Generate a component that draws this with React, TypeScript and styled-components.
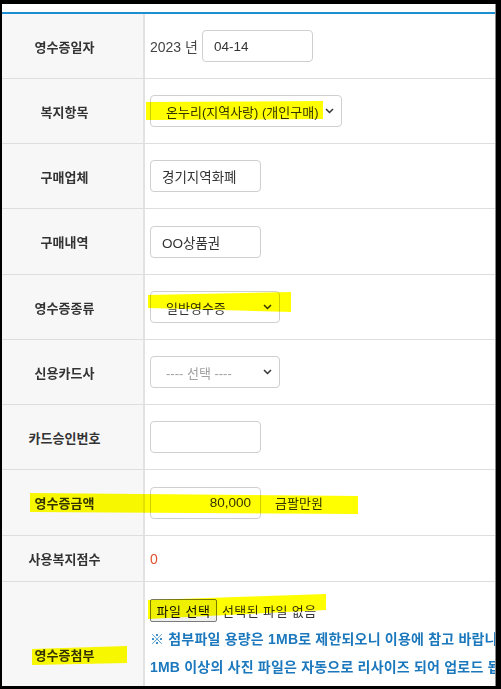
import React from 'react';
import styled, { createGlobalStyle } from 'styled-components';

const GlobalStyle = createGlobalStyle`
  html, body {
    margin: 0;
    padding: 0;
    background: #000;
  }
  * {
    box-sizing: border-box;
  }
`;

const FONT = `"Liberation Sans", "Noto Sans CJK KR", sans-serif`;

const Frame = styled.div`
  height: 689px;
  padding: 4px 5px 3px 2px;
  background: #000;
  overflow: hidden;
`;

const Panel = styled.div`
  height: 682px;
  background: #fff;
  border-right: 1px solid #8a8a8a;
  padding-top: 8px;
  overflow: hidden;
  font-family: ${FONT};
  color: #333;
`;

const Table = styled.div`
  border-top: 2px solid #1b8fd2;
`;

const Row = styled.div<{ $h: number }>`
  position: relative;
  display: grid;
  grid-template-columns: 143px 1fr;
  height: ${p => p.$h}px;
  border-bottom: 1px solid #dedede;
`;

const Label = styled.div`
  display: flex;
  align-items: center;
  justify-content: center;
  padding-right: 16px;
  background: #f7f7f7;
  border-right: 2px solid #e2e2e2;
  font-size: 13px;
  font-weight: 700;
  color: #333;
  white-space: nowrap;
`;

const Cell = styled.div<{ $top?: boolean }>`
  display: flex;
  flex-direction: ${p => (p.$top ? 'column' : 'row')};
  align-items: ${p => (p.$top ? 'flex-start' : 'center')};
  padding: ${p => (p.$top ? '17px 0 0 5px' : '0 0 0 5px')};
  font-size: 13px;
  white-space: nowrap;
  min-width: 0;
`;

const TextBox = styled.div<{ $right?: boolean }>`
  display: flex;
  align-items: center;
  justify-content: ${p => (p.$right ? 'flex-end' : 'flex-start')};
  width: 111px;
  height: 32px;
  padding: 0 9px 0 11px;
  border: 1px solid #cfcfcf;
  border-radius: 4px;
  background: #fff;
  font-size: 13.5px;
  color: #333;
`;

const Select = styled.div<{ $w: number; $muted?: boolean }>`
  display: flex;
  align-items: center;
  justify-content: space-between;
  width: ${p => p.$w}px;
  height: 32px;
  padding: 0 7px 0 15px;
  border: 1px solid #cfcfcf;
  border-radius: 4px;
  background: #fff;
  font-size: 13px;
  color: ${p => (p.$muted ? '#a0a0a0' : '#333')};
`;

const Chevron = () => (
  <svg width="9" height="6" viewBox="0 0 9 6">
    <path d="M1 1l3.5 3.5L8 1" fill="none" stroke="#333" strokeWidth="1.5" />
  </svg>
);

const Year = styled.span`
  margin-right: 4px;
  font-size: 14px;
  color: #444;
`;

const Won = styled.span`
  margin-left: 14px;
  font-size: 13px;
  color: #333;
`;

const Score = styled.span`
  font-size: 14px;
  color: #e0502e;
`;

const FileLine = styled.div`
  display: flex;
  align-items: center;
  font-size: 13px;
`;

const FileButton = styled.span`
  display: inline-flex;
  align-items: center;
  justify-content: center;
  width: 67px;
  height: 23px;
  border: 1px solid #7a7a7a;
  border-radius: 2px;
  background: #efefef;
  color: #111;
  font-size: 13px;
  letter-spacing: 0.5px;
`;

const FileName = styled.span`
  margin-left: 5px;
  color: #333;
  letter-spacing: 0.4px;
`;

const Notice = styled.p`
  margin: 7px 0 0;
  line-height: 21px;
  font-size: 14px;
  font-weight: 700;
  color: #1c78bd;
  letter-spacing: 0.2px;
`;

const Marker = styled.svg<{ $x: number; $y: number }>`
  position: absolute;
  left: ${p => p.$x}px;
  top: ${p => p.$y}px;
  mix-blend-mode: multiply;
  pointer-events: none;
`;

const Highlight = ({ x, y, w, h, points }: { x: number; y: number; w: number; h: number; points: string }) => (
  <Marker $x={x} $y={y} width={w} height={h} viewBox={`0 0 ${w} ${h}`}>
    <polygon points={points} fill="#ffff00" />
  </Marker>
);

export default function App() {
  return (
    <Frame>
      <GlobalStyle />
      <Panel>
        <Table>
          <Row $h={65}>
            <Label>영수증일자</Label>
            <Cell>
              <Year>2023 년</Year>
              <TextBox>04-14</TextBox>
            </Cell>
          </Row>

          <Row $h={65}>
            <Label>복지항목</Label>
            <Cell>
              <Select $w={192}>
                온누리(지역사랑) (개인구매)
                <Chevron />
              </Select>
            </Cell>
            <Highlight x={144} y={22} w={177} h={19} points="0,1 177,0 177,18 0,19" />
          </Row>

          <Row $h={65}>
            <Label>구매업체</Label>
            <Cell>
              <TextBox>경기지역화폐</TextBox>
            </Cell>
          </Row>

          <Row $h={66}>
            <Label>구매내역</Label>
            <Cell>
              <TextBox>OO상품권</TextBox>
            </Cell>
          </Row>

          <Row $h={65}>
            <Label>영수증종류</Label>
            <Cell>
              <Select $w={130}>
                일반영수증
                <Chevron />
              </Select>
            </Cell>
            <Highlight x={146} y={17} w={143} h={20} points="0,3 143,0 143,20 0,16" />
          </Row>

          <Row $h={65}>
            <Label>신용카드사</Label>
            <Cell>
              <Select $w={130} $muted>
                ---- 선택 ----
                <Chevron />
              </Select>
            </Cell>
          </Row>

          <Row $h={65}>
            <Label>카드승인번호</Label>
            <Cell>
              <TextBox />
            </Cell>
          </Row>

          <Row $h={66}>
            <Label>영수증금액</Label>
            <Cell>
              <TextBox $right>80,000</TextBox>
              <Won>금팔만원</Won>
            </Cell>
            <Highlight x={28} y={22} w={328} h={22} points="0,1 328,4 328,22 0,20" />
          </Row>

          <Row $h={46}>
            <Label>사용복지점수</Label>
            <Cell>
              <Score>0</Score>
            </Cell>
          </Row>

          <Row $h={146}>
            <Label>영수증첨부</Label>
            <Cell $top>
              <FileLine>
                <FileButton>파일 선택</FileButton>
                <FileName>선택된 파일 없음</FileName>
              </FileLine>
              <Notice>※ 첨부파일 용량은 1MB로 제한되오니 이용에 참고 바랍니다.</Notice>
              <Notice>1MB 이상의 사진 파일은 자동으로 리사이즈 되어 업로드 됩니다.</Notice>
            </Cell>
            <Highlight x={146} y={11} w={178} h={27} points="0,7 178,1 178,17 0,26" />
            <Highlight x={30} y={64} w={95} h={19} points="0,3 95,0 95,17 0,19" />
          </Row>
        </Table>
      </Panel>
    </Frame>
  );
}
